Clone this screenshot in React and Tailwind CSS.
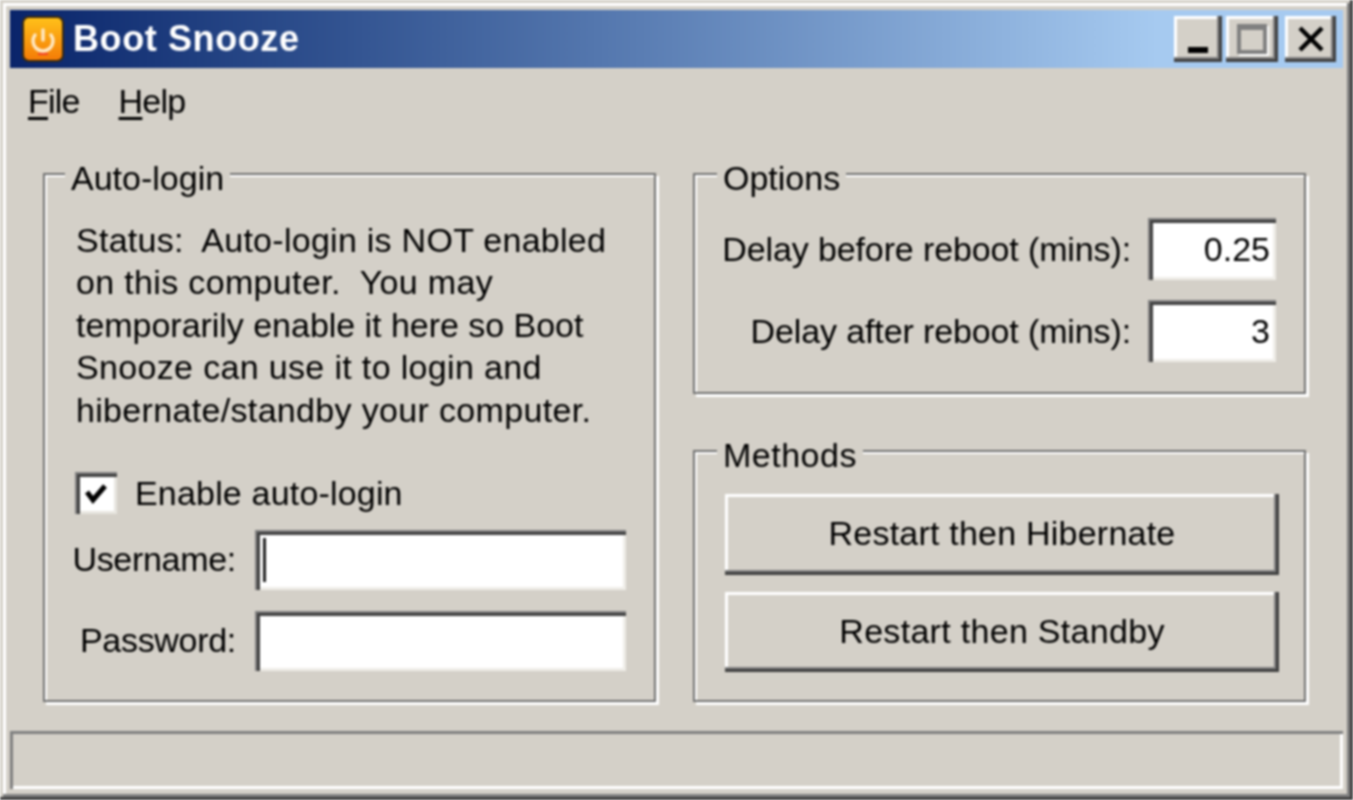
const sunken = "shadow-[inset_2px_2px_0_#808080,inset_5px_5px_0_#404040,inset_-3px_-3px_0_#efede8]";
const raised = "shadow-[inset_-3px_-3px_0_#404040,inset_-5px_-5px_0_#808080,inset_3px_3px_0_#fff]";
const group = "relative border-2 border-[#707070] shadow-[inset_2px_2px_0_#fff,3px_3px_0_#fff]";
const field = "bg-white outline-none border-0 text-black font-['Liberation_Sans',sans-serif] text-[34px] " + sunken;

function Legend({ children, className }) {
  return <span className={"absolute -top-[17px] bg-[#d4d0c8] px-[6px] leading-[40px] " + className}>{children}</span>;
}

function TitleButton({ children, className }) {
  return <div className={"h-[46px] flex items-center justify-center bg-[#d4d0c8] " + raised + " " + className}>{children}</div>;
}

function Icon() {
  return (
    <svg width="42" height="46" viewBox="0 0 42 46" className="shrink-0">
      <defs>
        <linearGradient id="ig" x1="0" y1="0" x2="0" y2="1">
          <stop offset="0" stopColor="#ffc21a" />
          <stop offset="1" stopColor="#f47a06" />
        </linearGradient>
      </defs>
      <rect x="1" y="1" width="40" height="44" rx="6" fill="url(#ig)" stroke="#3a2a10" strokeWidth="2" />
      <path d="M13 19a10 10 0 1 0 16 0" fill="none" stroke="#ffe9c4" strokeWidth="3.5" strokeLinecap="round" />
      <path d="M21 14v10" fill="none" stroke="#ffe9c4" strokeWidth="3.5" strokeLinecap="round" />
      <path d="M16 38h10" stroke="#f2402a" strokeWidth="2" />
    </svg>
  );
}

export default function App() {
  return (
    <div className="w-[1353px] h-[800px] overflow-hidden bg-[#d4d0c8] pt-[10px] px-[10px] flex flex-col text-black font-['Liberation_Sans',sans-serif] text-[34px] leading-[42.4px] shadow-[inset_-3px_-3px_0_#404040,inset_3px_3px_0_#d4d0c8,inset_-6px_-6px_0_#808080,inset_6px_6px_0_#fff] blur-[0.8px]">
      <div className="h-[58px] shrink-0 flex items-center pl-[12px] pr-[7px] bg-gradient-to-r from-[#0a246a] to-[#a6caf0] to-[86%]">
        <Icon />
        <span className="ml-[9px] text-white font-bold text-[36px] tracking-[0.6px]">Boot Snooze</span>
        <div className="ml-auto flex items-center">
          <TitleButton className="w-[48px] items-end pb-[9px]">
            <div className="w-[20px] h-[6px] bg-black" />
          </TitleButton>
          <TitleButton className="w-[52px] ml-[4px]">
            <div className="w-[30px] h-[30px] border-[4px] border-t-[6px] border-[#808080] shadow-[2px_2px_0_#fff]" />
          </TitleButton>
          <TitleButton className="w-[51px] ml-[7px]">
            <svg width="28" height="26" viewBox="0 0 28 26">
              <path d="M3 2l22 22M25 2L3 24" stroke="#000" strokeWidth="4.5" fill="none" />
            </svg>
          </TitleButton>
        </div>
      </div>

      <div className="h-[66px] shrink-0 flex items-center gap-[39px] pl-[18px] tracking-[-0.8px]">
        <span><span className="underline underline-offset-[4px]">F</span>ile</span>
        <span><span className="underline underline-offset-[4px]">H</span>elp</span>
      </div>

      <div className="mt-[39px] h-[530px] shrink-0 flex pl-[33px] pr-[33px] gap-[37px]">
        <div className={"w-[613px] h-[529px] pl-[31px] pt-[44px] " + group}>
          <Legend className="left-[20px]">Auto-login</Legend>
          <div className="whitespace-pre">
            <div className="tracking-[0.27px]">Status:  Auto-login is NOT enabled</div>
            <div className="tracking-[0.34px]">on this computer.  You may</div>
            <div className="tracking-[-0.03px]">temporarily enable it here so Boot</div>
            <div className="tracking-[0.34px]">Snooze can use it to login and</div>
            <div className="tracking-[0.33px]">hibernate/standby your computer.</div>
          </div>
          <div className="mt-[41px] -ml-[1px] flex items-center">
            <div className="w-[42px] h-[42px] bg-white flex items-center justify-center shadow-[inset_2px_2px_0_#808080,inset_5px_5px_0_#404040,inset_-3px_-3px_0_#e8e6e0]">
              <svg width="26" height="24" viewBox="0 0 26 24">
                <path d="M4 11l6 8L22 5" stroke="#000" strokeWidth="5" fill="none" />
              </svg>
            </div>
            <span className="ml-[18px] tracking-[0.18px]">Enable auto-login</span>
          </div>
          <div className="mt-[16px] flex items-center justify-end w-[550px] gap-[19px]">
            <span className="tracking-[-0.3px] pb-[2px]">Username:</span>
            <div className="relative">
              <input readOnly value="" className={"block w-[371px] h-[60px] " + field} />
              <span className="absolute left-[8px] top-[8px] w-[3px] h-[44px] bg-[#222]" />
            </div>
          </div>
          <div className="mt-[21px] flex items-center justify-end w-[550px] gap-[19px]">
            <span className="tracking-[-0.3px] pb-[2px]">Password:</span>
            <input readOnly value="" className={"block w-[371px] h-[60px] " + field} />
          </div>
        </div>

        <div className="w-[615px] flex flex-col">
          <div className={"w-[613px] h-[221px] pt-[43px] pr-[28px] flex flex-col items-end gap-[20px] " + group}>
            <Legend className="left-[22px]">Options</Legend>
            <div className="flex items-center gap-[17px]">
              <span className="tracking-[-0.12px]">Delay before reboot (mins):</span>
              <input readOnly value="0.25" className={"block w-[128px] h-[62px] text-right pr-[6px] " + field} />
            </div>
            <div className="flex items-center gap-[17px]">
              <span className="tracking-[-0.12px]">Delay after reboot (mins):</span>
              <input readOnly value="3" className={"block w-[128px] h-[62px] text-right pr-[6px] " + field} />
            </div>
          </div>
          <div className={"mt-[56px] w-[613px] h-[252px] pt-[42px] pl-[30px] " + group}>
            <Legend className="left-[22px] tracking-[0.5px]">Methods</Legend>
            <div className={"w-[554px] h-[81px] pb-[2px] flex items-center justify-center bg-[#d4d0c8] tracking-[0.22px] " + raised}>Restart then Hibernate</div>
            <div className={"mt-[17px] w-[554px] h-[80px] pb-[2px] flex items-center justify-center bg-[#d4d0c8] tracking-[0.3px] " + raised}>Restart then Standby</div>
          </div>
        </div>
      </div>

      <div className="mt-[28px] h-[58px] shrink-0 border-t-[3px] border-l-[3px] border-[#808080] shadow-[inset_-3px_-3px_0_#fff]" />
    </div>
  );
}
